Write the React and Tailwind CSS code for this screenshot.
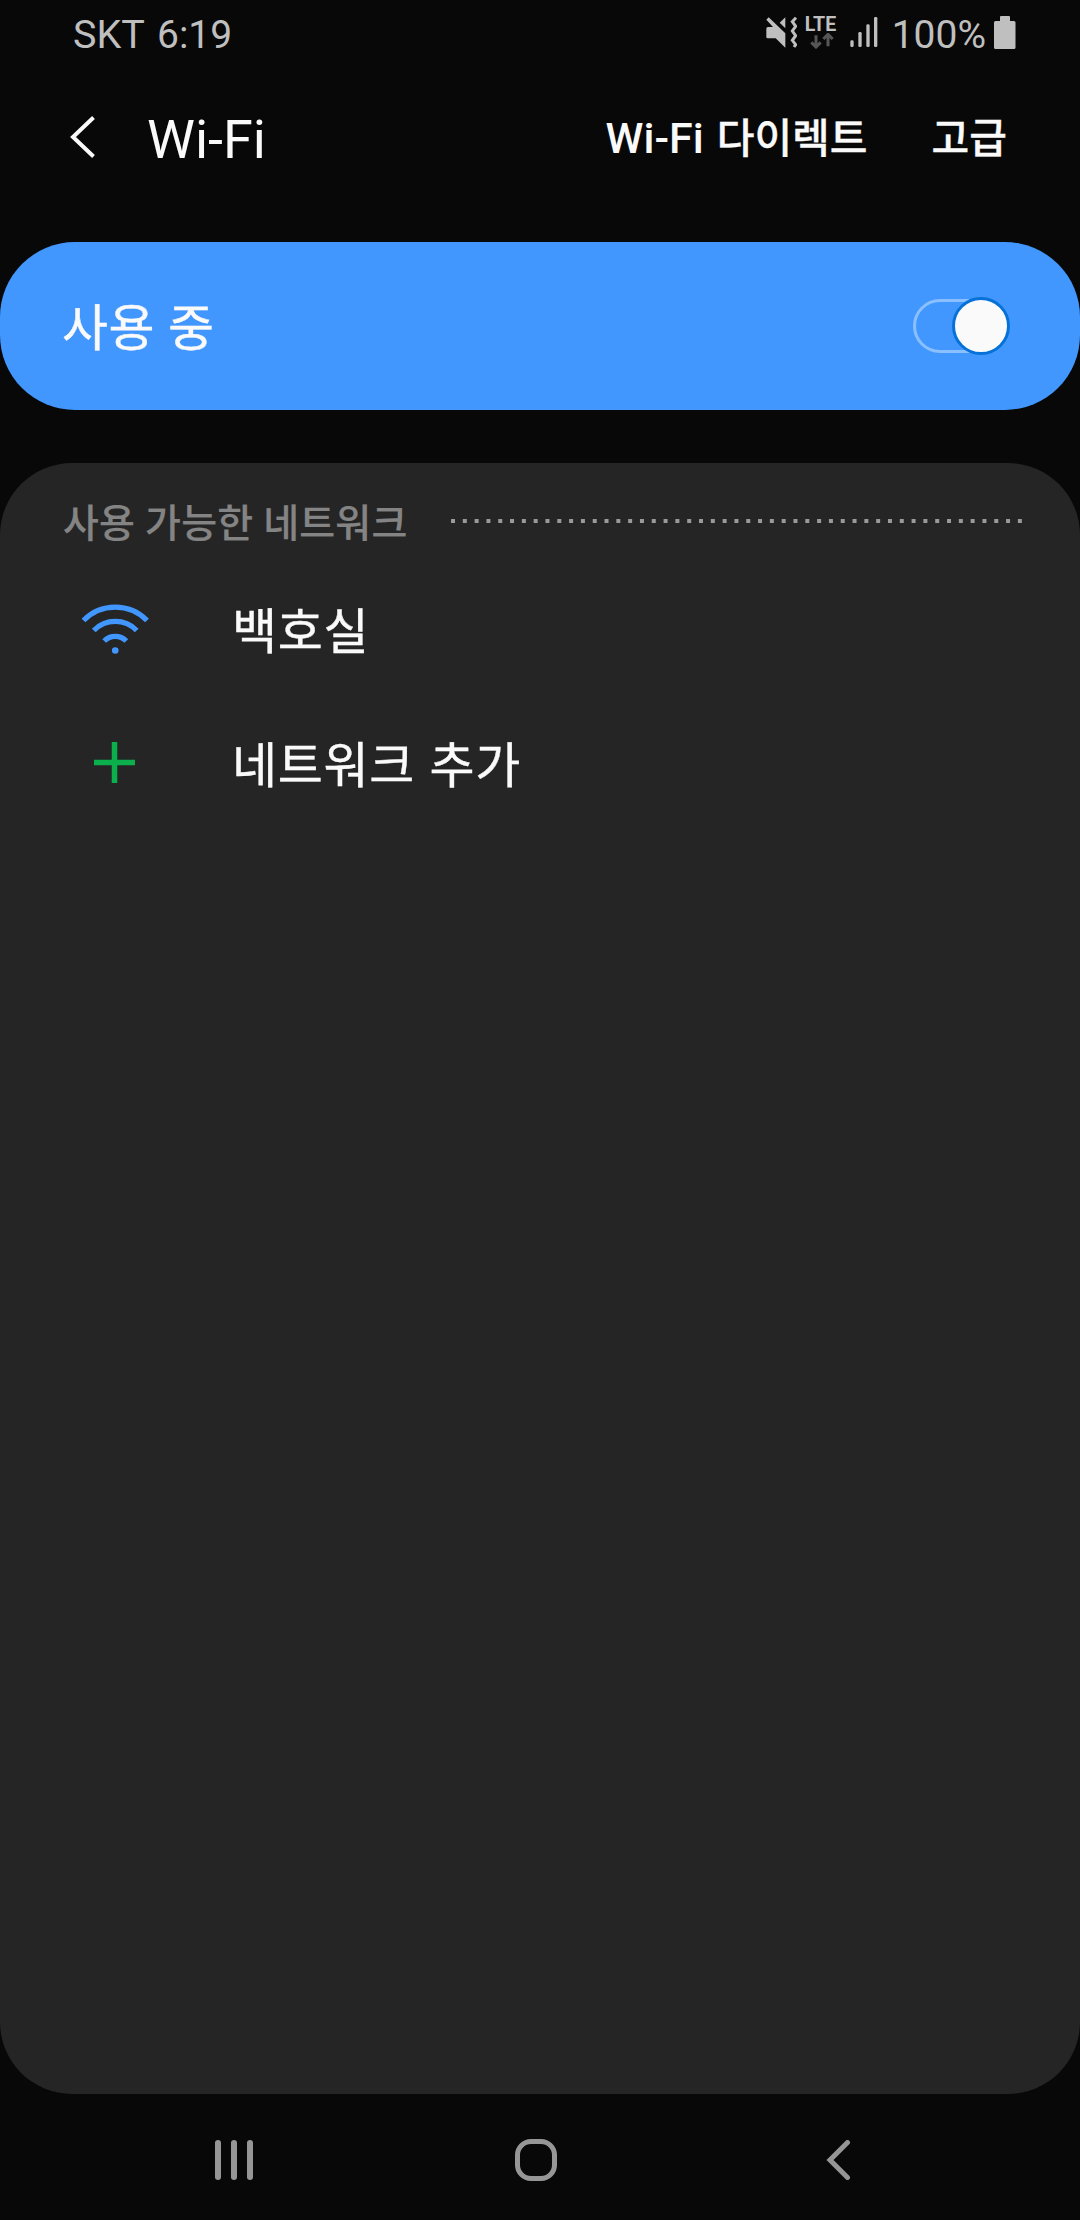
const uiFont = "font-['Roboto','Noto_Sans_CJK_KR',sans-serif]";

function MuteVibrateIcon() {
  return (
    <svg className="h-[34px] w-[32px]" viewBox="0 0 96 102" fill="#bfbfbf">
      <path d="M4 11 11 4 61 52V95L32 67H8Q4 67 4 63V38Q4 33 9 33H24Z" />
      <path d="M61 4V37L44 20Z" />
      <path d="M93 5 82 17 92 31 82 45 92 59 82 73 92 86 87 93" fill="none" stroke="#bfbfbf" strokeWidth="9" />
    </svg>
  );
}

function DataArrowsIcon() {
  return (
    <svg className="h-[16px] w-[24px]" viewBox="0 0 72 48" fill="none" stroke="#565656" strokeWidth="9">
      <path d="M18 7V42M4 28 18 42 32 28" />
      <path d="M54 40V4M40 18 54 4 68 18" />
    </svg>
  );
}

function SignalIcon() {
  return (
    <svg className="h-[32px] w-[28px]" viewBox="0 0 84 96" fill="#bfbfbf">
      <rect x="1" y="73" width="10" height="20" rx="4" />
      <rect x="25" y="48" width="10" height="45" rx="4" />
      <rect x="49" y="25" width="10" height="68" rx="4" />
      <rect x="72" y="3" width="10" height="90" rx="4" />
    </svg>
  );
}

function BatteryIcon() {
  return (
    <svg className="h-[33px] w-[22px]" viewBox="0 0 22 33" fill="#bfbfbf">
      <path d="M7 0h8q1 0 1 1v4h4q1.500 0 1.500 1.500v25q0 1.500-1.500 1.500H1.500Q0 33 0 31.500V6.500Q0 5 1.500 5H6V1q0-1 1-1z" />
    </svg>
  );
}

function StatusBar() {
  return (
    <header className={`flex h-[68px] items-center pl-[73px] text-[#bfbfbf] ${uiFont}`}>
      <div className="flex gap-[13px] pt-[2px] leading-[68px]">
        <span className="w-[71px] text-[39.5px] whitespace-nowrap">SKT</span>
        <span className="text-[39px] whitespace-nowrap">6:19</span>
      </div>
      <div className="ml-auto flex h-full pt-4 pr-[64px]">
        <MuteVibrateIcon />
        <div className="ml-[8px] w-[33px]">
          <div className="text-[19.5px] leading-[17px] font-bold">LTE</div>
          <div className="pl-[5px]">
            <DataArrowsIcon />
          </div>
        </div>
        <div className="ml-[12px]">
          <SignalIcon />
        </div>
        <span className="ml-[14px] text-[39px] leading-[38px]">100%</span>
        <div className="ml-[8px]">
          <BatteryIcon />
        </div>
      </div>
    </header>
  );
}

function TitleBar() {
  return (
    <div className={`flex h-[140px] items-center pl-[70px] text-[#fafafa] ${uiFont}`}>
      <svg className="mb-[3px] h-[44px] w-[28px]" viewBox="0 0 28 44" fill="none" stroke="#fafafa" strokeWidth="4">
        <path d="M23.500 2.500 3 22 23.500 41.500" />
      </svg>
      <h1 className="ml-[49px] pt-[2px] text-[54px] font-normal">Wi-Fi</h1>
      <div className="ml-auto flex items-baseline pr-[73px] text-[41px] font-medium whitespace-nowrap">
        <span className="text-[43px]">Wi-Fi</span>
        <span className="ml-[13px] [-webkit-text-stroke:0.3px]">다이렉트</span>
        <span className="ml-[64px] [-webkit-text-stroke:0.3px]">고급</span>
      </div>
    </div>
  );
}

function Toggle() {
  return (
    <div className="flex h-[58px] w-[97px] items-center">
      <div className="h-[54px] w-[95px] shrink-0 rounded-full border-3 border-[#8ac0ff]" />
      <div className="-ml-[56px] size-[58px] shrink-0 rounded-full border-3 border-[#0672d8] bg-[#fafafa]" />
    </div>
  );
}

function WifiIcon() {
  return (
    <svg className="mr-[2px] mb-[2px] h-[50px] w-[68px]" viewBox="0 0 68 50" fill="none" stroke="#4297ff" strokeWidth="5.300">
      <path d="M2.500 16.500A44.500 44.500 0 0 1 66 16.500" />
      <path d="M12.800 26.500A30 30 0 0 1 55.700 26.500" />
      <path d="M23.200 37A15.500 15.500 0 0 1 45.300 37" />
      <circle cx="34.250" cy="46.500" r="3.300" fill="#4297ff" stroke="none" />
    </svg>
  );
}

function PlusIcon() {
  return (
    <svg className="mr-[3px] mb-[3px] size-[41px]" viewBox="0 0 41 41" stroke="#0bb04c" strokeWidth="5.500">
      <path d="M0 20.500H41M20.500 0V41" />
    </svg>
  );
}

function NetworkRow({ icon, label }) {
  return (
    <div className="flex h-[134px] items-center">
      <div className="flex w-[232px] items-center justify-center">{icon}</div>
      <span
        className={`pt-[4px] text-[49px] leading-none tracking-[0.7px] text-[#fafafa] [-webkit-text-stroke:0.4px] [word-spacing:1.6px] ${uiFont}`}
      >
        {label}
      </span>
    </div>
  );
}

function NavBar() {
  return (
    <nav className="flex h-[126px] items-center pt-[6px] pl-[215px]">
      <div className="flex h-[40px] w-[38px] justify-between">
        <i className="w-[6px] rounded-full bg-[#969696]" />
        <i className="w-[6px] rounded-full bg-[#969696]" />
        <i className="w-[6px] rounded-full bg-[#969696]" />
      </div>
      <div className="ml-[262px] size-[42px] rounded-[16px] border-5 border-[#969696]" />
      <svg
        className="ml-[269px] h-[40px] w-[25px]"
        viewBox="0 0 25 40"
        fill="none"
        stroke="#969696"
        strokeWidth="5"
        strokeLinecap="round"
      >
        <path d="M21.500 2.500 4 20 21.500 37.500" />
      </svg>
    </nav>
  );
}

export default function App() {
  return (
    <div className="flex h-[2220px] w-[1080px] flex-col overflow-hidden bg-[#080808]">
      <StatusBar />
      <TitleBar />
      <section className="mt-[34px] flex h-[168px] items-center justify-between rounded-[75px] bg-[#4297ff] pr-[70px] pl-[62px]">
        <span className={`pt-[6px] text-[50px] tracking-[0.5px] text-[#fafafa] [-webkit-text-stroke:0.4px] ${uiFont}`}>
          사용 중
        </span>
        <Toggle />
      </section>
      <main className="mt-[53px] flex h-[1631px] flex-col rounded-[72px] bg-[#252525]">
        <div className="flex h-[100px] items-center pt-[16px] pl-[63px]">
          <h2
            className={`w-[388px] pt-[6px] text-[39px] font-medium tracking-[0.2px] whitespace-nowrap text-[#848484] [-webkit-text-stroke:0.2px] ${uiFont}`}
          >
            사용 가능한 네트워크
          </h2>
          <svg className="h-[4px] w-[572px]" viewBox="0 0 572 4">
            <path d="M0 2H572" stroke="#9a9a9a" strokeWidth="4" strokeDasharray="4 7.810" />
          </svg>
        </div>
        <NetworkRow icon={<WifiIcon />} label="백호실" />
        <NetworkRow icon={<PlusIcon />} label="네트워크 추가" />
      </main>
      <NavBar />
    </div>
  );
}
